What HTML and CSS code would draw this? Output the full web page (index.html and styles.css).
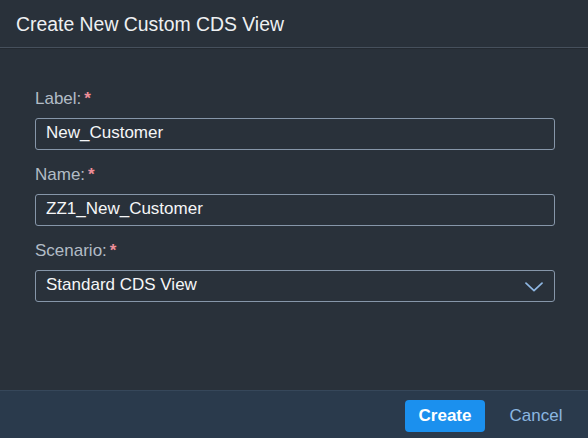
FILE: index.html
```html
<!DOCTYPE html>
<html lang="en">
<head>
<meta charset="utf-8">
<title>Create New Custom CDS View</title>
<link rel="stylesheet" href="styles.css">
</head>
<body>
<div class="dialog">
  <header class="dialog-header">
    <h1 class="dialog-title">Create New Custom CDS View</h1>
  </header>
  <main class="dialog-content">
    <div class="field">
      <label class="field-label">Label:<span class="required">*</span></label>
      <div class="input"><span class="input-value">New_Customer</span></div>
    </div>
    <div class="field">
      <label class="field-label">Name:<span class="required">*</span></label>
      <div class="input"><span class="input-value">ZZ1_New_Customer</span></div>
    </div>
    <div class="field">
      <label class="field-label">Scenario:<span class="required">*</span></label>
      <div class="input select">
        <span class="input-value">Standard CDS View</span>
        <svg class="chevron" width="18" height="10" viewBox="0 0 18 10" aria-hidden="true">
          <path d="M1 1.2 L9 8.6 L17 1.2" fill="none" stroke="#8fb7e3" stroke-width="1.7" stroke-linecap="round" stroke-linejoin="round"/>
        </svg>
      </div>
    </div>
  </main>
  <footer class="dialog-footer">
    <button class="btn btn-emph">Create</button>
    <button class="btn btn-lite">Cancel</button>
  </footer>
</div>
</body>
</html>
```

FILE: styles.css
```css
html, body {
  margin: 0;
  padding: 0;
  height: 100%;
}
body {
  background: #29313a;
  font-family: "Liberation Sans", Arial, sans-serif;
  color: #eaecee;
}
.dialog {
  display: flex;
  flex-direction: column;
  height: 438px;
  width: 588px;
  background: #29313a;
}
.dialog-header {
  height: 48px;
  box-sizing: border-box;
  display: flex;
  align-items: center;
  padding: 2px 16px 0;
  border-bottom: 1px solid #46505c;
  box-shadow: 0 1px 0 #242a31;
}
.dialog-title {
  margin: 0;
  font-size: 19.4px;
  font-weight: normal;
  color: #eef0f2;
  line-height: 1;
}
.dialog-content {
  flex: 1;
  display: flex;
  flex-direction: column;
  gap: 15px;
  padding: 41px 33px 0 35px;
}
.field {
  display: flex;
  flex-direction: column;
  gap: 9px;
}
.field-label {
  font-size: 17px;
  line-height: 20px;
  color: #b2bcc6;
}
.required {
  color: #ee8e98;
  font-weight: bold;
  margin-left: 3px;
}
.input {
  height: 32px;
  box-sizing: border-box;
  border: 1px solid #8696a9;
  border-radius: 3px;
  background: #29313a;
  display: flex;
  align-items: center;
  padding: 0 10px;
}
.input-value {
  font-size: 17px;
  color: #f5f6f7;
  flex: 1;
  position: relative;
  top: -1px;
}
.select {
  padding-right: 11px;
}
.chevron {
  display: block;
  position: relative;
  top: 1px;
}
.dialog-footer {
  height: 48px;
  box-sizing: border-box;
  background: #2a3a4c;
  border-top: 1px solid #36475a;
  display: flex;
  justify-content: flex-end;
  align-items: flex-start;
  gap: 11px;
  padding: 9px 12px 0;
}
.btn {
  height: 32px;
  width: 80px;
  border: none;
  border-radius: 4px;
  font-family: "Liberation Sans", Arial, sans-serif;
  font-size: 17px;
  padding: 0;
  cursor: pointer;
}
.btn-emph {
  background: #1b90ee;
  color: #ffffff;
  font-weight: bold;
}
.btn-lite {
  background: transparent;
  color: #8bb6e0;
}
```
